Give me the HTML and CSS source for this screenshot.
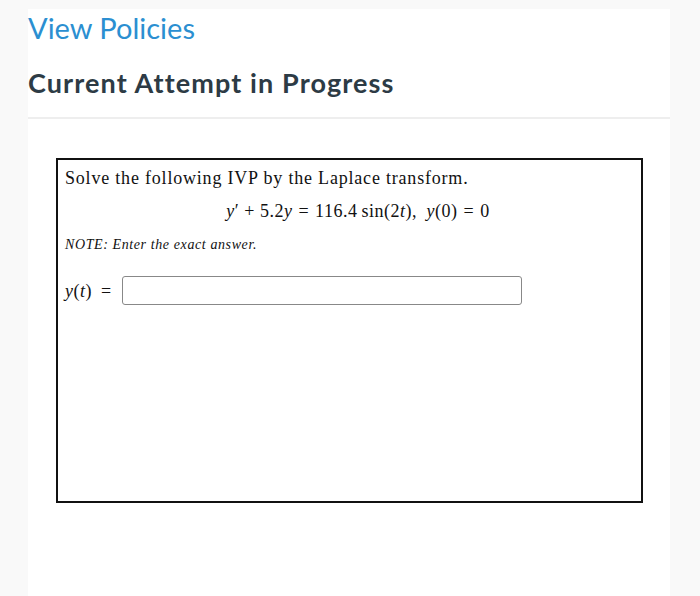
FILE: index.html
```html
<!DOCTYPE html>
<html>
<head>
<meta charset="utf-8">
<link rel="stylesheet" href="styles.css">
</head>
<body>
<div class="page">
  <a class="link" href="#">View Policies</a>
  <h1 class="title">Current Attempt in Progress</h1>
  <div class="rule"></div>
  <div class="box">
    <p class="prompt">Solve the following IVP by the Laplace transform.</p>
    <p class="eq"><i>y</i>&#8242;<span class="op">+</span>5.2<i>y</i><span class="rel">=</span>116.4&#8201;sin(2<i>t</i>),&#8194;<i>y</i>(0)<span class="rel">=</span>0</p>
    <p class="note">NOTE: Enter the exact answer.</p>
    <div class="answer">
      <span class="lhs"><i>y</i>(<i>t</i>)<span class="rel">=</span></span>
      <input class="field" type="text">
    </div>
  </div>
</div>
</body>
</html>
```
FILE: styles.css
```css
html, body {
  margin: 0;
  padding: 0;
  background: #f9f9f9;
}
.page {
  margin: 9px 0 0 28px;
  width: 642px;
  min-height: 587px;
  padding-top: 1px;
  background: #ffffff;
  box-sizing: border-box;
}
.link {
  display: block;
  font-family: Lato, "Liberation Sans", sans-serif;
  font-size: 29px;
  line-height: 36px;
  color: #2b8fd1;
  text-decoration: none;
}
.title {
  margin: 21px 0 0 0;
  font-family: Lato, "Liberation Sans", sans-serif;
  font-weight: 700;
  font-size: 27px;
  line-height: 32px;
  letter-spacing: 1.1px;
  color: #2d3b45;
}
.rule {
  margin-top: 18px;
  height: 2px;
  background: #eeeeee;
}
.box {
  margin: 39px 0 0 28px;
  width: 587px;
  height: 345px;
  border: 2px solid #111111;
  box-sizing: border-box;
  padding: 8px 7px 0 7px;
  font-family: "Liberation Serif", "DejaVu Serif", serif;
  color: #111111;
}
.box p {
  margin: 0;
}
.prompt {
  font-size: 18px;
  line-height: 20px;
  letter-spacing: 0.8px;
}
.eq {
  margin-top: 13px !important;
  font-size: 18px;
  line-height: 20px;
  letter-spacing: 0.5px;
  text-align: center;
  padding-left: 17px;
}
.op {
  margin: 0 5px;
}
.rel {
  margin: 0 6px;
}
.note {
  margin-top: 16px !important;
  font-size: 14px;
  line-height: 16px;
  letter-spacing: 0.6px;
  font-style: italic;
}
.answer {
  margin-top: 23px;
  display: flex;
  align-items: center;
  gap: 6px;
}
.lhs {
  min-width: 51px;
  font-size: 18px;
  line-height: 20px;
  letter-spacing: 0.5px;
}
.lhs .rel {
  margin: 0 0 0 9px;
}
.field {
  width: 400px;
  height: 29px;
  box-sizing: border-box;
  border: 1px solid #888888;
  border-radius: 3px;
  margin: 0;
  padding: 0;
  background: #fff;
}
```
